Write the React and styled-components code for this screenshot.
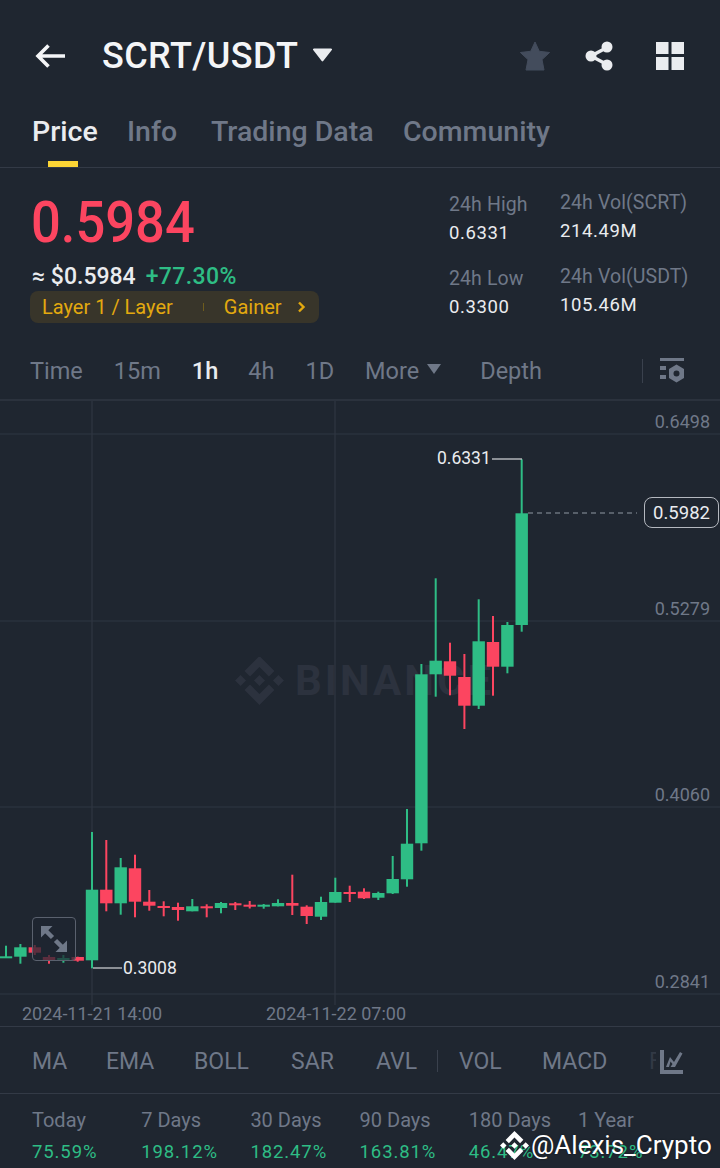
import React from "react";
import styled, { createGlobalStyle } from "styled-components";
import { SiBinance } from "react-icons/si";

const GlobalStyle = createGlobalStyle`
  html, body { margin: 0; padding: 0; background: #1f2630; }
  body { font-family: "Roboto", "Liberation Sans", sans-serif; }
`;

const GREEN = "#2ebd85";
const RED = "#fc4560";

// x, up?, high, bodyTop, bodyBottom, low (page pixels)
const candles = [
  [6, 1, 945.7, 956.3, 958, 958],
  [20.4, 1, 944, 947.3, 956.7, 963.7],
  [34.8, 0, 945, 947.3, 952.7, 955],
  [49, 0, 955, 957, 960, 963.7],
  [63.4, 1, 955, 958, 960, 962.7],
  [77.7, 0, 956.7, 957, 960.7, 961.7],
  [92, 1, 832, 889.7, 960.3, 968.3],
  [106.3, 0, 840, 889.7, 903.3, 911.3],
  [120.7, 1, 858, 867.3, 903.3, 914.7],
  [135, 0, 854.7, 868.3, 901.7, 917.3],
  [149.3, 0, 890, 901.7, 905.7, 910.7],
  [163.7, 0, 901.3, 906, 907.7, 916.3],
  [178, 0, 902.7, 907, 910, 920.7],
  [192.3, 1, 899, 906.3, 911.3, 911.3],
  [206.7, 0, 904.3, 906.3, 908.3, 917.3],
  [221, 1, 902, 903, 908, 913.3],
  [235.3, 0, 902, 903.3, 905.3, 910],
  [249.7, 0, 901, 904.7, 906.5, 908.5],
  [263.7, 1, 904, 904.7, 906.3, 908.7],
  [278, 1, 899.3, 903, 906.3, 906.3],
  [292.3, 0, 874.7, 903, 905.7, 915],
  [306.7, 0, 905.3, 906.7, 916, 924],
  [321, 1, 896.7, 902, 916.7, 920],
  [335.3, 1, 877.7, 892, 902.7, 902.7],
  [349.7, 0, 885.7, 892, 893.7, 902],
  [364, 0, 888.3, 891.7, 898.3, 899],
  [378.3, 1, 891.7, 893, 897.7, 900],
  [392.7, 1, 856, 879, 893.3, 894],
  [407, 1, 809, 843.7, 879.3, 886.7],
  [421.4, 1, 664, 674.3, 843.3, 850.7],
  [435.7, 1, 578.3, 660.7, 674.3, 696.7],
  [450, 0, 642.7, 661.3, 675.7, 695.3],
  [464.4, 0, 654, 677, 705.7, 729],
  [478.7, 1, 599.3, 641.3, 705.7, 709],
  [493, 0, 616, 642, 666.7, 695.7],
  [507.4, 1, 622, 625, 666.7, 673.3],
  [521.7, 1, 459.3, 513.3, 625, 631.7],
];

const gridRows = [434, 621, 807, 994];
const gridCols = [92, 335];
const axisLabels = [
  ["0.6498", 421],
  ["0.5279", 608],
  ["0.4060", 794],
  ["0.2841", 981],
];

const tabs = [
  ["Price", 64],
  ["Info", 53],
  ["Trading Data", 161],
  ["Community", 147],
];
const intervals = ["Time", "15m", "1h", "4h", "1D"];
const overlays = [
  ["MA", 34],
  ["EMA", 48],
  ["BOLL", 57],
  ["SAR", 45],
  ["AVL", 40],
];
const subCharts = [
  ["VOL", 43],
  ["MACD", 65],
];
const returns = [
  ["Today", "75.59%"],
  ["7 Days", "198.12%"],
  ["30 Days", "182.47%"],
  ["90 Days", "163.81%"],
  ["180 Days", "46.47%"],
  ["1 Year", "73.72%"],
];

const Page = styled.div`
  width: 720px;
  height: 1168px;
  position: relative;
  overflow: hidden;
  background: #1f2630;
  color: #eaecef;
`;

const TopBar = styled.header`
  height: 112px;
  box-sizing: border-box;
  padding: 0 36px 0 35px;
  display: flex;
  align-items: center;
`;

const Title = styled.div`
  margin-left: 37px;
  font-size: 36px;
  font-weight: 500;
  color: #f4f5f7;
  letter-spacing: 0.4px;
`;

const TitleCaret = styled.svg`
  margin-left: 15px;
  margin-top: -4px;
`;

const TopIcons = styled.div`
  margin-left: auto;
  display: flex;
  align-items: center;
`;

const StarIcon = styled.svg`
  margin-right: 35px;
`;

const ShareIcon = styled.svg`
  margin-right: 43px;
`;

const Tabs = styled.nav`
  height: 56px;
  box-sizing: border-box;
  padding-left: 32px;
  display: flex;
  gap: 31px;
  border-bottom: 1px solid #333a46;
`;

const Tab = styled.div`
  position: relative;
  width: ${(p) => p.$w}px;
  padding-top: 1px;
  font-size: 28.5px;
  line-height: 38px;
  font-weight: 500;
  white-space: nowrap;
  color: ${(p) => (p.$active ? "#eaecef" : "#6f7888")};

  ${(p) =>
    p.$active &&
    `&::after {
      content: "";
      position: absolute;
      left: 16px;
      bottom: 0;
      width: 30px;
      height: 6px;
      background: #fcd535;
    }`}
`;

const Summary = styled.section`
  height: 177px;
  box-sizing: border-box;
  padding: 26px 32px 0 30px;
  display: flex;
  justify-content: space-between;
`;

const PriceBlock = styled.div`
  display: flex;
  flex-direction: column;
  align-items: flex-start;
`;

const BigPrice = styled.div`
  font-size: 58px;
  line-height: 56px;
  font-weight: 500;
  color: ${RED};
  margin-left: 1px;
  transform: scaleX(0.905);
  transform-origin: left center;
`;

const FiatRow = styled.div`
  margin-top: 12px;
  margin-left: 2px;
  display: flex;
  gap: 10px;
  font-size: 23px;
  line-height: 30px;
  font-weight: 500;
`;

const Change = styled.span`
  color: ${GREEN};
  letter-spacing: 0.4px;
`;

const TagBar = styled.div`
  width: 289px;
  height: 32px;
  margin-top: -1px;
  box-sizing: border-box;
  padding: 0 12px;
  display: flex;
  align-items: center;
  background: #38352a;
  border-radius: 8px;
  color: #e3a90f;
  font-size: 20px;
`;

const TagSep = styled.i`
  width: 1px;
  height: 8px;
  margin: 0 20px 0 30px;
  background: #6e5c1d;
`;

const TagChevron = styled.svg`
  margin-left: 15px;
`;

const StatsGrid = styled.div`
  display: flex;
  gap: 32px;
`;

const StatColumn = styled.div`
  display: flex;
  flex-direction: column;
  width: ${(p) => p.$w}px;
  margin-top: ${(p) => p.$offset}px;
`;

const StatLabel = styled.div`
  font-size: 19.5px;
  line-height: 26px;
  color: #6f7888;
  white-space: nowrap;
  letter-spacing: 0.1px;
`;

const StatValue = styled.div`
  font-size: 18.5px;
  line-height: 26px;
  margin-top: 2px;
  margin-bottom: 20px;
  color: #eaecef;
  letter-spacing: 0.6px;
`;

const IntervalBar = styled.div`
  height: 56px;
  box-sizing: border-box;
  padding: 0 36px 3px 30px;
  display: flex;
  align-items: center;
  border-bottom: 2px solid #2b323d;
  font-size: 23.5px;
`;

const Interval = styled.span`
  margin-right: ${(p) => (p.$active ? 30 : p.$gap)}px;
  color: ${(p) => (p.$active ? "#eaecef" : "#6f7888")};
  font-weight: ${(p) => (p.$active ? 500 : 400)};
`;

const MoreCaret = styled.svg`
  margin-right: 39px;
  margin-top: -3px;
`;

const RowDivider = styled.i`
  width: 1px;
  height: ${(p) => p.$h}px;
  background: #3a414d;
  margin: ${(p) => p.$margin};
`;

const Chart = styled.div`
  position: relative;
  height: 625px;
  border-bottom: 1px solid #333a46;
`;

const ChartSvg = styled.svg`
  position: absolute;
  inset: 0;
`;

const Watermark = styled.div`
  position: absolute;
  left: 235px;
  top: 255px;
  display: flex;
  align-items: center;
  gap: 11px;
  color: #2c323e;
  font-size: 42px;
  font-weight: 700;
  letter-spacing: 3px;
`;

const AxisLabel = styled.span`
  position: absolute;
  right: 10px;
  top: ${(p) => p.$y - 412}px;
  font-size: 18px;
  line-height: 24px;
  color: #6f7888;
`;

const PriceTag = styled.div`
  position: absolute;
  left: 644px;
  top: 96px;
  width: 75px;
  height: 31px;
  box-sizing: border-box;
  border: 1px solid #b4b8bf;
  border-radius: 8px;
  background: #1f2630;
  display: flex;
  align-items: center;
  justify-content: center;
  font-size: 18.5px;
  color: #eaecef;
`;

const PeakLabel = styled.span`
  position: absolute;
  left: ${(p) => p.$x}px;
  top: ${(p) => p.$y}px;
  font-size: 17.5px;
  line-height: 22px;
  color: #eaecef;
`;

const ExpandButton = styled.div`
  position: absolute;
  left: 32px;
  top: 516px;
  width: 44px;
  height: 44px;
  box-sizing: border-box;
  border: 1px solid #5a616e;
  border-radius: 4px;
  background: rgba(31, 38, 48, 0.72);
  display: flex;
  align-items: center;
  justify-content: center;
`;

const DateLabel = styled.span`
  position: absolute;
  left: ${(p) => p.$x}px;
  top: 601px;
  font-size: 18px;
  line-height: 24px;
  color: #6f7888;
  transform: translateX(-50%);
  white-space: nowrap;
`;

const IndicatorBar = styled.div`
  position: relative;
  height: 67px;
  box-sizing: border-box;
  padding: 2px 0 0 32px;
  display: flex;
  align-items: center;
  gap: 40px;
  border-bottom: 1px solid #333a46;
  font-size: 23px;
  color: #6f7888;
  overflow: hidden;
`;

const Indicator = styled.span`
  width: ${(p) => p.$w}px;
  white-space: nowrap;
`;

const FadedLetter = styled.span`
  width: 7px;
  overflow: hidden;
  margin-left: 2px;
  color: #323945;
`;

const IndicatorIcon = styled.svg`
  position: absolute;
  right: 37px;
  top: 23px;
`;

const Returns = styled.div`
  display: grid;
  grid-template-columns: repeat(6, 109.2px);
  padding: 13px 0 0 32px;
`;

const ReturnCell = styled.div`
  display: flex;
  flex-direction: column;
  gap: 5px;
`;

const ReturnLabel = styled.span`
  font-size: 20px;
  line-height: 27px;
  color: #6f7888;
  white-space: nowrap;
`;

const ReturnValue = styled.span`
  font-size: 18.5px;
  line-height: 26px;
  color: ${GREEN};
  letter-spacing: 0.9px;
`;

const Credit = styled.div`
  position: absolute;
  left: 500px;
  top: 1130px;
  display: flex;
  align-items: center;
  gap: 2px;
  font-size: 26px;
  line-height: 30px;
  color: #fff;
  text-shadow: 0 0 2px rgba(0, 0, 0, 0.5);
  white-space: nowrap;
`;

const CandleChart = () => (
  <ChartSvg width="720" height="625" viewBox="0 401 720 625">
    {gridRows.map((y) => (
      <line key={y} x1="0" x2="720" y1={y} y2={y} stroke="#2f3642" strokeWidth="1.2" />
    ))}
    {gridCols.map((x) => (
      <line key={x} x1={x} x2={x} y1="401" y2="1005" stroke="#2f3642" strokeWidth="1.2" />
    ))}
    {candles.map(([x, up, high, top, bottom, low]) => (
      <g key={x} fill={up ? GREEN : RED}>
        <rect x={x - 1} y={high} width="2" height={low - high} />
        <rect x={x - 6.2} y={top} width="12.4" height={Math.max(bottom - top, 2)} />
      </g>
    ))}
    <path d="M492 459H522" stroke="#d5d7db" strokeWidth="1.2" fill="none" />
    <path d="M93 968H122" stroke="#d5d7db" strokeWidth="1.2" fill="none" />
    <path d="M528 513H637" stroke="#9097a1" strokeWidth="1.2" strokeDasharray="5 4" fill="none" />
  </ChartSvg>
);

const App = () => (
  <Page>
    <GlobalStyle />

    <TopBar>
      <svg width="30" height="26" viewBox="0 0 30 26">
        <path d="M30 13H3M13.500 2.500 3 13l10.500 10.500" fill="none" stroke="#f4f5f7" strokeWidth="3.6" />
      </svg>
      <Title>SCRT/USDT</Title>
      <TitleCaret width="19" height="15" viewBox="0 0 19 15">
        <path d="M1 1.500h17a1 1 0 0 1 .8 1.600L10.200 14a1 1 0 0 1-1.500 0L.2 3.100A1 1 0 0 1 1 1.500Z" fill="#eaecef" />
      </TitleCaret>
      <TopIcons>
        <StarIcon width="30" height="30" viewBox="0 0 30 30">
          <path
            d="M15 1 19.300 10.300 29.600 11.500 22 18.600 24 29H6l2-10.400L.4 11.500l10.300-1.200Z"
            fill="#434c5c"
            stroke="#434c5c"
            strokeLinejoin="round"
          />
        </StarIcon>
        <ShareIcon width="28" height="30" viewBox="0 0 28 30">
          <path d="M22 6.500 6 15l16 8.500" fill="none" stroke="#eaecef" strokeWidth="3.4" />
          <circle cx="22" cy="6" r="5.500" fill="#eaecef" />
          <circle cx="6" cy="15" r="5.500" fill="#eaecef" />
          <circle cx="22" cy="24" r="5.500" fill="#eaecef" />
        </ShareIcon>
        <svg width="28" height="28" viewBox="0 0 28 28" fill="#eaecef">
          <rect x="0" y="0" width="12.500" height="12" />
          <rect x="15.500" y="0" width="12.500" height="12" />
          <rect x="0" y="15" width="12.500" height="13" />
          <rect x="15.500" y="15" width="12.500" height="13" />
        </svg>
      </TopIcons>
    </TopBar>

    <Tabs>
      {tabs.map(([label, w], i) => (
        <Tab key={label} $w={w} $active={i === 0}>
          {label}
        </Tab>
      ))}
    </Tabs>

    <Summary>
      <PriceBlock>
        <BigPrice>0.5984</BigPrice>
        <FiatRow>
          <span>≈ $0.5984</span>
          <Change>+77.30%</Change>
        </FiatRow>
        <TagBar>
          <span>Layer 1 / Layer</span>
          <TagSep />
          <span>Gainer</span>
          <TagChevron width="9" height="12" viewBox="0 0 9 12">
            <path d="M2 1.500 6.500 6 2 10.500" fill="none" stroke="#e3a90f" strokeWidth="2.4" />
          </TagChevron>
        </TagBar>
      </PriceBlock>
      <StatsGrid>
        <StatColumn $w={79} $offset={-2}>
          <StatLabel>24h High</StatLabel>
          <StatValue>0.6331</StatValue>
          <StatLabel>24h Low</StatLabel>
          <StatValue>0.3300</StatValue>
        </StatColumn>
        <StatColumn $w={128} $offset={-4}>
          <StatLabel>24h Vol(SCRT)</StatLabel>
          <StatValue>214.49M</StatValue>
          <StatLabel>24h Vol(USDT)</StatLabel>
          <StatValue>105.46M</StatValue>
        </StatColumn>
      </StatsGrid>
    </Summary>

    <IntervalBar>
      {intervals.map((t) => (
        <Interval key={t} $active={t === "1h"} $gap={31}>
          {t}
        </Interval>
      ))}
      <Interval $gap={8}>More</Interval>
      <MoreCaret width="14" height="10" viewBox="0 0 14 10">
        <path d="M0 0h14L7 10Z" fill="#6f7888" />
      </MoreCaret>
      <Interval $gap={0}>Depth</Interval>
      <RowDivider $h={24} $margin="0 17px 0 auto" />
      <svg width="24" height="26" viewBox="0 0 24 26" fill="#6f7888">
        <rect x="0" y="0" width="24" height="3" />
        <rect x="0" y="8" width="6" height="4" />
        <rect x="0" y="17" width="6" height="4" />
        <path
          fillRule="evenodd"
          d="M16.500 6.500 24 11v9l-7.500 4.500L9 20v-9Zm0 6a3 3 0 1 0 0 6 3 3 0 0 0 0-6Z"
        />
      </svg>
    </IntervalBar>

    <Chart>
      <Watermark>
        <SiBinance size={49} />
        BINANCE
      </Watermark>
      <CandleChart />
      {axisLabels.map(([label, y]) => (
        <AxisLabel key={label} $y={y}>
          {label}
        </AxisLabel>
      ))}
      <PriceTag>0.5982</PriceTag>
      <PeakLabel $x={437} $y={46}>0.6331</PeakLabel>
      <PeakLabel $x={123} $y={556}>0.3008</PeakLabel>
      <ExpandButton>
        <svg width="26" height="26" viewBox="0 0 26 26" fill="#6f7888">
          <path d="M0 0h11.500L0 11.500Z" />
          <path d="M26 26H14.500L26 14.500Z" />
          <path d="M4 4 11.500 11.500M14.500 14.500 22 22" stroke="#6f7888" strokeWidth="4.500" />
        </svg>
      </ExpandButton>
      <DateLabel $x={92}>2024-11-21 14:00</DateLabel>
      <DateLabel $x={336}>2024-11-22 07:00</DateLabel>
    </Chart>

    <IndicatorBar>
      {overlays.map(([t, w]) => (
        <Indicator key={t} $w={w}>
          {t}
        </Indicator>
      ))}
      <RowDivider $h={22} $margin="0 -19px" />
      {subCharts.map(([t, w]) => (
        <Indicator key={t} $w={w}>
          {t}
        </Indicator>
      ))}
      <FadedLetter>F</FadedLetter>
      <IndicatorIcon width="23" height="24" viewBox="0 0 23 24" fill="#6f7888">
        <path d="M0 0h4v20h19v4H0Z" />
        <path d="M6 17 10 7l4 5 6-10 2.500 1.500L15 17h-4.500l2-3-2-2.500L9 17Z" />
      </IndicatorIcon>
    </IndicatorBar>

    <Returns>
      {returns.map(([label, value]) => (
        <ReturnCell key={label}>
          <ReturnLabel>{label}</ReturnLabel>
          <ReturnValue>{value}</ReturnValue>
        </ReturnCell>
      ))}
    </Returns>

    <Credit>
      <SiBinance size={29} />
      @Alexis_Crypto
    </Credit>
  </Page>
);

export default App;
